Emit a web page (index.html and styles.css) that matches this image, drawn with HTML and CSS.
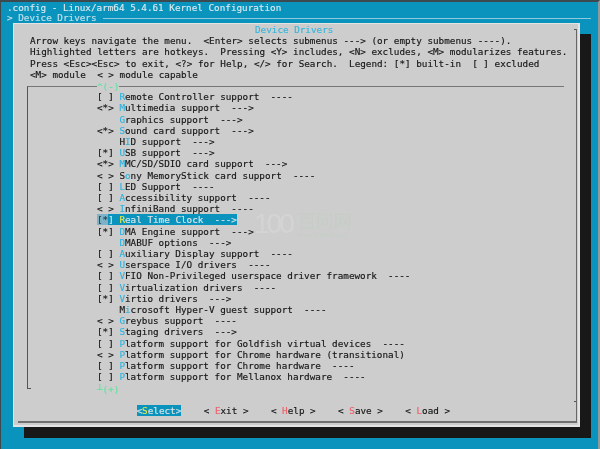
FILE: index.html
```html
<!DOCTYPE html>
<html lang="en">
<head>
<meta charset="utf-8">
<title>Kernel Configuration</title>
<link rel="stylesheet" href="styles.css">
</head>
<body>
<div class="term">
  <div class="title">.config - Linux/arm64 5.4.61 Kernel Configuration</div>
  <div class="crumb"><span>&gt; Device Drivers</span><i class="crumb-rule"></i></div>
  <div class="dialog">
    <div class="dialog-title">Device Drivers</div>
    <pre class="help">Arrow keys navigate the menu.  &lt;Enter&gt; selects submenus ---&gt; (or empty submenus ----).
Highlighted letters are hotkeys.  Pressing &lt;Y&gt; includes, &lt;N&gt; excludes, &lt;M&gt; modularizes features.
Press &lt;Esc&gt;&lt;Esc&gt; to exit, &lt;?&gt; for Help, &lt;/&gt; for Search.  Legend: [*] built-in  [ ] excluded
&lt;M&gt; module  &lt; &gt; module capable</pre>
    <div class="menu">
      <div class="watermark">
        <span class="wm-logo">100</span>
        <span class="wm-brand"><span class="wm-big">百问网</span><span class="wm-small">www.100ask.net</span></span>
      </div>
      <div class="arrow-top">^(-)</div>
<pre class="items">[ ] <b>R</b>emote Controller support  ----
&lt;*&gt; <b>M</b>ultimedia support  ---&gt;
    <b>G</b>raphics support  ---&gt;
&lt;*&gt; <b>S</b>ound card support  ---&gt;
    H<b>I</b>D support  ---&gt;
[*] <b>U</b>SB support  ---&gt;
&lt;*&gt; <b>M</b>MC/SD/SDIO card support  ---&gt;
&lt; &gt; S<b>o</b>ny MemoryStick card support  ----
[ ] <b>L</b>ED Support  ----
[ ] <b>A</b>ccessibility support  ----
&lt; &gt; <b>I</b>nfiniBand support  ----
<span class="sel"><span class="sel-mark">[*</span>] <b>R</b>eal Time Clock  ---&gt;</span>
[*] <b>D</b>MA Engine support  ---&gt;
    <b>D</b>MABUF options  ---&gt;
[ ] <b>A</b>uxiliary Display support  ----
&lt; &gt; <b>U</b>serspace I/O drivers  ----
[ ] <b>V</b>FIO Non-Privileged userspace driver framework  ----
[ ] <b>V</b>irtualization drivers  ----
[*] <b>V</b>irtio drivers  ---&gt;
    M<b>i</b>crosoft Hyper-V guest support  ----
&lt; &gt; <b>G</b>reybus support  ----
[*] <b>S</b>taging drivers  ---&gt;
[ ] <b>P</b>latform support for Goldfish virtual devices  ----
&lt; &gt; <b>P</b>latform support for Chrome hardware (transitional)
[ ] <b>P</b>latform support for Chrome hardware  ----
[ ] <b>P</b>latform support for Mellanox hardware  ----</pre>
      <div class="arrow-bottom">┴(+)</div>
    </div>
    <div class="buttons">
      <div class="slot"><span class="btn on">&lt;<b>S</b>elect&gt;</span></div>
      <div class="slot"><span class="btn">&lt; <b>E</b>xit &gt;</span></div>
      <div class="slot"><span class="btn">&lt; <b>H</b>elp &gt;</span></div>
      <div class="slot"><span class="btn">&lt; <b>S</b>ave &gt;</span></div>
      <div class="slot"><span class="btn">&lt; <b>L</b>oad &gt;</span></div>
    </div>
  </div>
</div>
</body>
</html>
```
FILE: styles.css
```css
html, body { margin: 0; padding: 0; }
body { width: 600px; height: 449px; overflow: hidden; background: #0a94bd; }
pre { margin: 0; font: inherit; }
b { font-weight: normal; }
.term {
  box-sizing: border-box;
  width: 600px;
  height: 449px;
  border-top: 2px solid #3c4a50;
  border-left: 1px solid #3c4a50;
  border-right: 2px solid #8f9a9e;
  background: #0a94bd;
  font-family: "DejaVu Sans Mono", monospace;
  font-size: 9.3px;
  line-height: 11.2px;
  color: #ccc;
  white-space: nowrap;
  -webkit-text-stroke: 0.15px currentColor;
  filter: blur(0.25px);
}
.title { height: 11px; padding-left: 6px; color: #d8e8ee; }
.crumb {
  display: flex;
  align-items: center;
  gap: 6px;
  box-sizing: border-box;
  width: 590px;
  height: 10px;
  padding-left: 6px;
  color: #bfe0ea;
}
.crumb-rule { flex: 1; height: 1px; background: #8ccbdf; }
.dialog {
  position: relative;
  box-sizing: border-box;
  width: 567px;
  height: 404px;
  margin-left: 12px;
  padding-left: 16px;
  background: #cdcdcd;
  border-top: 1px solid #e4e4e4;
  border-left: 1px solid #e4e4e4;
  border-right: 2px solid #e4e4e4;
  border-bottom: 2px solid #e4e4e4;
  box-shadow: 11px 11px 0 #181818;
  color: #161616;
}
.dialog::after {
  content: "";
  position: absolute;
  left: 4px;
  right: 1px;
  top: 5px;
  bottom: 2px;
  border-right: 1px solid #666;
  border-bottom: 2px solid #707070;
}
.dialog::before {
  content: "";
  position: absolute;
  right: 1px;
  top: 5px;
  width: 3px;
  height: 371px;
  border-top: 1px solid #555;
  border-bottom: 1px solid #555;
}
.dialog-title { padding-left: 225px; color: #38b6dc; }
.menu {
  position: relative;
  box-sizing: border-box;
  width: 537px;
  height: 303px;
  margin: 5.8px 0 0 -3px;
  padding-left: 69px;
  border-top: 1px solid #777;
  border-left: 1px solid #555;
}
.menu::after {
  content: "";
  position: absolute;
  left: 0;
  bottom: 0;
  width: 3px;
  border-bottom: 1px solid #555;
}
.items { position: relative; padding-top: 4.4px; }
.items b { color: #2fb4e0; }
.sel { background: #0a94bd; color: #d8e4e8; }
.sel-mark { background: #7fb2c6; color: #20424f; }
.sel b { color: #e6e64a; }
.arrow-top, .arrow-bottom { position: absolute; left: 69px; color: #5fe3a0; line-height: 11px; background: #cdcdcd; }
.arrow-top { top: -6px; }
.arrow-bottom { bottom: -6px; }
.watermark { position: absolute; left: 226px; top: 123px; display: flex; gap: 6px; -webkit-text-stroke: 0; }
.wm-logo { font-family: "Liberation Sans", sans-serif; font-size: 28px; line-height: 28px; letter-spacing: -3px; color: #d3d5d3; }
.wm-brand { display: flex; flex-direction: column; }
.wm-big { font-family: "Noto Sans CJK SC", sans-serif; font-size: 18px; line-height: 21px; color: #c4cec5; }
.wm-small { font-family: "DejaVu Sans", sans-serif; font-size: 6px; line-height: 8px; color: #c4cec5; }
.buttons { display: flex; margin: 16.4px 0 0 106.5px; }
.slot { flex: 0 0 67.2px; }
.btn { display: inline-block; }
.btn b { color: #f0606a; }
.btn.on { background: #0a94bd; color: #d8e4e8; }
.btn.on b { color: #e6e64a; }
```
